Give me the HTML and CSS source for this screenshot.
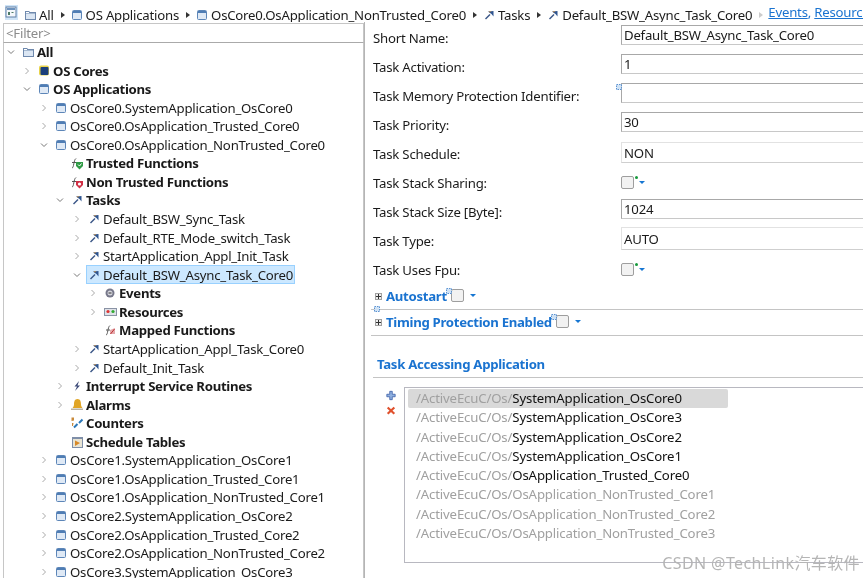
FILE: index.html
```html
<!DOCTYPE html>
<html lang="en">
<head>
<meta charset="utf-8">
<title>Task editor</title>
<link rel="stylesheet" href="styles.css">
</head>
<body>
<svg class="defs" width="0" height="0" aria-hidden="true">
  <symbol id="i-folder" viewBox="0 0 16 16"><path d="M3 4h4l1 1h6v8H3z" fill="#6f89ad"/><path d="M4 6.500h9V12H4z" fill="#dbe6f3"/><path d="M4 5h3v1H4z" fill="#fff"/></symbol>
  <symbol id="i-app" viewBox="0 0 16 16"><rect x="3.500" y="3.500" width="9" height="9" rx="1" fill="#dfe9f5" stroke="#5d86b8"/><path d="M4 4h8v2H4z" fill="#4f7db4"/></symbol>
  <symbol id="i-core" viewBox="0 0 16 16"><rect x="3" y="2.500" width="10" height="10" rx="2" fill="#e8d34a"/><rect x="4.500" y="4" width="8" height="8" rx="1" fill="#1b3f7c"/></symbol>
  <symbol id="i-task" viewBox="0 0 16 16"><path d="M4.500 12 9 7.500" stroke="#3a5687" stroke-width="1.400" fill="none"/><path d="M7 4.500 12.500 4 12.500 9.500 10.500 7 9 6z" fill="#2f5590"/><path d="M7.500 4.500 10.500 4.200 8.800 5.600z" fill="#c98a3a"/></symbol>
  <symbol id="i-fx-ok" viewBox="0 0 16 16"><path d="M3 13C5 13 4.500 5 7 3.500" stroke="#555" stroke-width="1" fill="none"/><path d="M3 7.500h4" stroke="#555"/><path d="M7 7h7v4l-3.500 3.500L7 11z" fill="#2f9a45"/><path d="M9 9.500l1.500 1.500 2-2.500" stroke="#fff" fill="none"/></symbol>
  <symbol id="i-fx-no" viewBox="0 0 16 16"><path d="M3 13C5 13 4.500 5 7 3.500" stroke="#555" stroke-width="1" fill="none"/><path d="M3 7.500h4" stroke="#555"/><path d="M7 7h7v4l-3.500 3.500L7 11z" fill="#d12f45"/><circle cx="10.500" cy="10" r="1.600" fill="#fff"/></symbol>
  <symbol id="i-event" viewBox="0 0 16 16"><circle cx="8" cy="8" r="4.500" fill="#77788a"/><circle cx="8" cy="8" r="2.500" fill="#d6d6de"/><path d="M6.500 8h3" stroke="#333"/></symbol>
  <symbol id="i-res" viewBox="0 0 16 16"><rect x="2" y="4" width="13" height="8" fill="#8a93a5"/><rect x="3" y="5" width="11" height="6" fill="#dfe2e8"/><circle cx="6" cy="7.500" r="1.600" fill="#d33"/><circle cx="11" cy="7.500" r="1.600" fill="#3a3"/></symbol>
  <symbol id="i-map" viewBox="0 0 16 16"><path d="M4 13C6 13 5.500 5 8 3.500" stroke="#555" fill="none"/><path d="M4 8h4" stroke="#555"/><path d="M8 8l5-2v6H8z" fill="#e5a8ac"/><path d="M8.500 12 12.500 7" stroke="#b33"/></symbol>
  <symbol id="i-irq" viewBox="0 0 16 16"><path d="M10 3 5.500 8.500H8L6 13l5-5.500H8.500z" fill="#3c4a78"/></symbol>
  <symbol id="i-bell" viewBox="0 0 16 16"><path d="M8.500 2c3 0 3.500 3 3.500 5.500 0 2 1.500 3.500 1.500 3.500h-10s1.500-1.500 1.500-3.500C5 5 5.500 2 8.500 2z" fill="#e0a526"/><path d="M2 11.500h12V13H2z" fill="#b9b2a2"/></symbol>
  <symbol id="i-count" viewBox="0 0 16 16"><path d="M2.500 2.500h2.500v3L2.500 6zM3 8h1.500l-.5 3H3z" fill="#c98a3a"/><path d="M5 12.500 8.500 9M10 8l3.500-3.500" stroke="#2c78b8" stroke-width="2" fill="none"/></symbol>
  <symbol id="i-sched" viewBox="0 0 16 16"><rect x="3" y="3" width="11" height="11" fill="#7f8fa8"/><rect x="4" y="5" width="9" height="8" fill="#e8e4d4"/><path d="M6 6.500l5 2.500-5 3z" fill="#d88a28"/></symbol>
  <symbol id="i-shut" viewBox="0 0 8 8"><path d="M2.500 1 5.500 4 2.500 7" stroke="#a8a8a8" fill="none"/></symbol>
  <symbol id="i-open" viewBox="0 0 8 8"><path d="M1 2.500 4 5.500 7 2.500" stroke="#777" fill="none"/></symbol>
  <symbol id="i-deco" viewBox="0 0 6 6"><rect x=".5" y=".5" width="5" height="5" fill="#cfe2f5" stroke="#5b93d2" stroke-width="1" stroke-dasharray="1.500 1"/></symbol>
</svg>

<header class="crumbs">
  <span class="home"><svg class="ico" viewBox="0 0 12 12"><rect x="1" y="1" width="10" height="10" fill="#f4f8fc" stroke="#5f7ea6"/><path d="M2 2h8v2H2z" fill="#6d92bd"/><path d="M3 6h2v3H3zM6.500 6h2v1h-2z" fill="#4d7a66"/></svg></span>
  <svg class="ico"><use href="#i-folder"/></svg><span>All</span><i class="sep"></i>
  <svg class="ico"><use href="#i-app"/></svg><span>OS Applications</span><i class="sep"></i>
  <svg class="ico"><use href="#i-app"/></svg><span>OsCore0.OsApplication_NonTrusted_Core0</span><i class="sep"></i>
  <svg class="ico"><use href="#i-task"/></svg><span>Tasks</span><i class="sep"></i>
  <svg class="ico"><use href="#i-task"/></svg><span>Default_BSW_Async_Task_Core0</span><i class="sep faint"></i>
  <span class="links"><a href="#">Events</a>, <a href="#">Resources</a></span>
</header>

<main class="main">
  <nav class="tree-pane">
    <div class="filter">&lt;Filter&gt;</div>
    <ul class="tree">
      <li class="row l0 b"><svg class="tw"><use href="#i-open"/></svg><svg class="ico"><use href="#i-folder"/></svg>All</li>
      <li class="row l1 b"><svg class="tw"><use href="#i-shut"/></svg><svg class="ico"><use href="#i-core"/></svg>OS Cores</li>
      <li class="row l1 b"><svg class="tw"><use href="#i-open"/></svg><svg class="ico"><use href="#i-app"/></svg>OS Applications</li>
      <li class="row l2"><svg class="tw"><use href="#i-shut"/></svg><svg class="ico"><use href="#i-app"/></svg>OsCore0.SystemApplication_OsCore0</li>
      <li class="row l2"><svg class="tw"><use href="#i-shut"/></svg><svg class="ico"><use href="#i-app"/></svg>OsCore0.OsApplication_Trusted_Core0</li>
      <li class="row l2"><svg class="tw"><use href="#i-open"/></svg><svg class="ico"><use href="#i-app"/></svg>OsCore0.OsApplication_NonTrusted_Core0</li>
      <li class="row l3 b"><span class="tw"></span><svg class="ico"><use href="#i-fx-ok"/></svg>Trusted Functions</li>
      <li class="row l3 b"><span class="tw"></span><svg class="ico"><use href="#i-fx-no"/></svg>Non Trusted Functions</li>
      <li class="row l3 b"><svg class="tw"><use href="#i-open"/></svg><svg class="ico"><use href="#i-task"/></svg>Tasks</li>
      <li class="row l4"><svg class="tw"><use href="#i-shut"/></svg><svg class="ico"><use href="#i-task"/></svg>Default_BSW_Sync_Task</li>
      <li class="row l4"><svg class="tw"><use href="#i-shut"/></svg><svg class="ico"><use href="#i-task"/></svg>Default_RTE_Mode_switch_Task</li>
      <li class="row l4"><svg class="tw"><use href="#i-shut"/></svg><svg class="ico"><use href="#i-task"/></svg>StartApplication_Appl_Init_Task</li>
      <li class="row l4"><svg class="tw"><use href="#i-open"/></svg><span class="sel"><svg class="ico"><use href="#i-task"/></svg>Default_BSW_Async_Task_Core0</span></li>
      <li class="row l5 b"><svg class="tw"><use href="#i-shut"/></svg><svg class="ico"><use href="#i-event"/></svg>Events</li>
      <li class="row l5 b"><svg class="tw"><use href="#i-shut"/></svg><svg class="ico"><use href="#i-res"/></svg>Resources</li>
      <li class="row l5 b"><span class="tw"></span><svg class="ico"><use href="#i-map"/></svg>Mapped Functions</li>
      <li class="row l4"><svg class="tw"><use href="#i-shut"/></svg><svg class="ico"><use href="#i-task"/></svg>StartApplication_Appl_Task_Core0</li>
      <li class="row l4"><svg class="tw"><use href="#i-shut"/></svg><svg class="ico"><use href="#i-task"/></svg>Default_Init_Task</li>
      <li class="row l3 b"><svg class="tw"><use href="#i-shut"/></svg><svg class="ico"><use href="#i-irq"/></svg>Interrupt Service Routines</li>
      <li class="row l3 b"><svg class="tw"><use href="#i-shut"/></svg><svg class="ico"><use href="#i-bell"/></svg>Alarms</li>
      <li class="row l3 b"><span class="tw"></span><svg class="ico"><use href="#i-count"/></svg>Counters</li>
      <li class="row l3 b"><span class="tw"></span><svg class="ico"><use href="#i-sched"/></svg>Schedule Tables</li>
      <li class="row l2"><svg class="tw"><use href="#i-shut"/></svg><svg class="ico"><use href="#i-app"/></svg>OsCore1.SystemApplication_OsCore1</li>
      <li class="row l2"><svg class="tw"><use href="#i-shut"/></svg><svg class="ico"><use href="#i-app"/></svg>OsCore1.OsApplication_Trusted_Core1</li>
      <li class="row l2"><svg class="tw"><use href="#i-shut"/></svg><svg class="ico"><use href="#i-app"/></svg>OsCore1.OsApplication_NonTrusted_Core1</li>
      <li class="row l2"><svg class="tw"><use href="#i-shut"/></svg><svg class="ico"><use href="#i-app"/></svg>OsCore2.SystemApplication_OsCore2</li>
      <li class="row l2"><svg class="tw"><use href="#i-shut"/></svg><svg class="ico"><use href="#i-app"/></svg>OsCore2.OsApplication_Trusted_Core2</li>
      <li class="row l2"><svg class="tw"><use href="#i-shut"/></svg><svg class="ico"><use href="#i-app"/></svg>OsCore2.OsApplication_NonTrusted_Core2</li>
      <li class="row l2"><svg class="tw"><use href="#i-shut"/></svg><svg class="ico"><use href="#i-app"/></svg>OsCore3.SystemApplication_OsCore3</li>
    </ul>
  </nav>

  <section class="editor">
    <div class="fields">
      <label>Short Name:</label><div class="input">Default_BSW_Async_Task_Core0</div>
      <label>Task Activation:</label><div class="input">1</div>
      <label>Task Memory Protection Identifier:</label><div class="input"><svg class="deco d-field"><use href="#i-deco"/></svg></div>
      <label>Task Priority:</label><div class="input">30</div>
      <label>Task Schedule:</label><div class="combo">NON</div>
      <label>Task Stack Sharing:</label><div class="check-wrap"><span class="check"></span><i class="dot"></i><i class="drop"></i></div>
      <label>Task Stack Size [Byte]:</label><div class="input">1024</div>
      <label>Task Type:</label><div class="combo tall">AUTO</div>
      <label>Task Uses Fpu:</label><div class="check-wrap"><span class="check"></span><i class="dot"></i><i class="drop"></i></div>
    </div>

    <div class="fold">
      <span class="plus"></span><span class="fold-title">Autostart</span><svg class="deco d-title"><use href="#i-deco"/></svg><span class="check"></span><i class="drop far"></i>
    </div>
    <div class="fold">
      <svg class="deco d-line"><use href="#i-deco"/></svg>
      <span class="plus"></span><span class="fold-title">Timing Protection Enabled</span><svg class="deco d-title"><use href="#i-deco"/></svg><span class="check"></span><i class="drop far"></i>
    </div>

    <h2 class="section">Task Accessing Application</h2>

    <div class="list-area">
      <div class="tools">
        <svg class="tool" viewBox="0 0 12 12"><path d="M4.500 1h3v3.500H11v3H7.500V11h-3V7.500H1v-3h3.500z" fill="#8fb0e0" stroke="#3f62a8"/></svg>
        <svg class="tool" viewBox="0 0 12 12"><path d="M2 2.500 10 10M10 2.500 2 10" stroke="#e0512d" stroke-width="2.600"/></svg>
      </div>
      <ul class="refs">
        <li class="ref active"><span class="path">/ActiveEcuC/Os/</span>SystemApplication_OsCore0</li>
        <li class="ref"><span class="path">/ActiveEcuC/Os/</span>SystemApplication_OsCore3</li>
        <li class="ref"><span class="path">/ActiveEcuC/Os/</span>SystemApplication_OsCore2</li>
        <li class="ref"><span class="path">/ActiveEcuC/Os/</span>SystemApplication_OsCore1</li>
        <li class="ref"><span class="path">/ActiveEcuC/Os/</span>OsApplication_Trusted_Core0</li>
        <li class="ref muted">/ActiveEcuC/Os/OsApplication_NonTrusted_Core1</li>
        <li class="ref muted">/ActiveEcuC/Os/OsApplication_NonTrusted_Core2</li>
        <li class="ref muted">/ActiveEcuC/Os/OsApplication_NonTrusted_Core3</li>
      </ul>
    </div>
  </section>
</main>
<div class="watermark">CSDN @TechLink汽车软件</div>
</body>
</html>
```

FILE: styles.css
```css
* { box-sizing: border-box; }
html, body { margin: 0; padding: 0; }
body {
  position: relative;
  width: 863px;
  height: 578px;
  overflow: hidden;
  background: #fff;
  color: #1a1a1a;
  font-family: "Noto Sans", "Noto Sans CJK SC", sans-serif;
  font-size: 13.2px;
  letter-spacing: -0.22px;
  filter: blur(0.3px);
}
.defs { position: absolute; }
ul { list-style: none; margin: 0; padding: 0; }
.ico { width: 16px; height: 16px; flex: none; }

/* breadcrumb */
.crumbs {
  display: flex;
  align-items: center;
  height: 22px;
  padding: 8px 0 0 5px;
  overflow: hidden;
  white-space: nowrap;
}
.home {
  display: flex;
  align-items: center;
  justify-content: center;
  width: 15px;
  height: 15px;
  margin: -6px 4px 0 0;
  background: #cfe4f7;
}
.home .ico { width: 12px; height: 12px; }
.crumbs .ico { margin-right: 1px; }
.sep {
  flex: none;
  width: 0;
  height: 0;
  margin: 0 4px 0 7px;
  border-left: 4px solid #333;
  border-top: 3px solid transparent;
  border-bottom: 3px solid transparent;
}
.sep.faint { border-left-color: #ccc; margin-right: 5px; }
.links { margin-top: -6px; color: #1a73d0; }
.links a { color: #1a73d0; }

.main { display: flex; height: 556px; }

/* tree */
.tree-pane {
  flex: none;
  width: 365px;
  padding-left: 3px;
  border-right: 1px solid #b5b5b5;
  overflow: hidden;
}
.filter {
  width: 361px;
  height: 20px;
  margin-top: 1px;
  padding-left: 2px;
  color: #8c8c8c;
  line-height: 19px;
  border: 1px solid #c6c6c6;
  border-bottom-color: #aaa;
}
.tree {
  width: 361px;
  height: 540px;
  margin-top: -0.3px;
  border-left: 1px solid #c6c6c6;
  border-right: 1px solid #c6c6c6;
}
.row {
  display: flex;
  align-items: center;
  height: 18.57px;
  white-space: nowrap;
}
.b { font-weight: 700; letter-spacing: -0.3px; }
.tw { flex: none; width: 8px; height: 8px; margin: 0 5px 0 3px; }
.row .ico { margin-right: 1px; }
.l0 { padding-left: 0; }
.l1 { padding-left: 16px; }
.l2 { padding-left: 33px; }
.l3 { padding-left: 49px; }
.l4 { padding-left: 66px; }
.l5 { padding-left: 82px; }
.sel {
  display: flex;
  align-items: center;
  height: 19px;
  padding-right: 1px;
  background: #cce8ff;
  border: 1px solid #99d1ff;
}
.sel .ico { margin-left: -1px; }

/* editor */
.editor {
  flex: 1;
  min-width: 0;
  padding: 1px 0 0 8px;
  overflow: hidden;
}
.fields {
  display: grid;
  grid-template-columns: 248px 300px;
  grid-auto-rows: 29px;
}
.fields label { padding-top: 6px; line-height: 18px; }
.input {
  position: relative;
  height: 20px;
  margin-top: 2px;
  padding-left: 2px;
  line-height: 19px;
  border: 1px solid #c8c8c8;
  border-top-color: #a8a8a8;
  border-left-color: #a8a8a8;
}
.combo {
  height: 21px;
  margin-top: 3px;
  padding-left: 2px;
  line-height: 20px;
  border: 1px solid #e2e2e2;
  border-bottom-color: #cfcfcf;
}
.combo.tall { height: 23px; margin-top: 1px; line-height: 22px; }
.check-wrap { display: flex; align-items: center; position: relative; }
.check {
  display: block;
  flex: none;
  width: 13px;
  height: 13px;
  background: #f2f2f2;
  border: 1px solid #9e9e9e;
  border-radius: 2px;
}
.dot {
  position: absolute;
  left: 14px;
  top: 8px;
  width: 3px;
  height: 3px;
  border-radius: 50%;
  background: #159a3c;
}
.drop {
  display: block;
  width: 0;
  height: 0;
  margin-left: 5px;
  border-left: 3px solid transparent;
  border-right: 3px solid transparent;
  border-top: 3px solid #1676d2;
}
.drop.far { margin-left: 6px; }
.deco { position: absolute; width: 6px; height: 6px; }
.d-field { left: -6px; top: 0; }

.fold {
  position: relative;
  display: flex;
  align-items: center;
  height: 26px;
  margin-left: -2px;
  padding: 0 0 2px 4px;
  border-bottom: 1px solid #c4c4c4;
}
.plus {
  flex: none;
  width: 7px;
  height: 7px;
  margin: 1px 4px 0 0;
  border: 1px solid #a0a0a0;
  background: linear-gradient(#333, #333) center / 5px 1px no-repeat, linear-gradient(#333, #333) center / 1px 5px no-repeat, #eee;
}
.fold-title { font-weight: 700; letter-spacing: -0.3px; color: #1a73d0; }
.fold .deco.d-title { position: relative; flex: none; align-self: flex-start; margin: 4px 0 0 -1px; }
.fold .check { margin-left: -1px; }
.d-line { left: 3px; top: -4px; }

.section {
  height: 22px;
  margin: 20px 0 0 0;
  padding: 0 0 4px 4px;
  font-size: 13.2px;
  line-height: 16px;
  font-weight: 700;
  letter-spacing: -0.3px;
  color: #1a73d0;
  border-bottom: 1px solid #c4c4c4;
}
.list-area { display: flex; padding-top: 9px; }
.tools { display: flex; flex-direction: column; gap: 4px; flex: none; width: 31px; padding: 3px 0 0 13px; }
.tool { width: 10px; height: 11px; }
.refs {
  flex: none;
  width: 470px;
  height: 176px;
  padding: 1px 0 0 3px;
  letter-spacing: -0.15px;
  border: 1px solid #b8b8c0;
}
.ref {
  width: 320px;
  height: 19.3px;
  padding-left: 8px;
  line-height: 19px;
  white-space: nowrap;
  color: #111;
}
.ref.active { background: #d9d9d9; border-radius: 2px; }
.path, .muted { color: #a0a0a0; }

.watermark {
  position: absolute;
  right: 3px;
  bottom: 5px;
  font-size: 16px;
  letter-spacing: 0.4px;
  line-height: 20px;
  color: #b5b5b5;
  white-space: nowrap;
}
```
